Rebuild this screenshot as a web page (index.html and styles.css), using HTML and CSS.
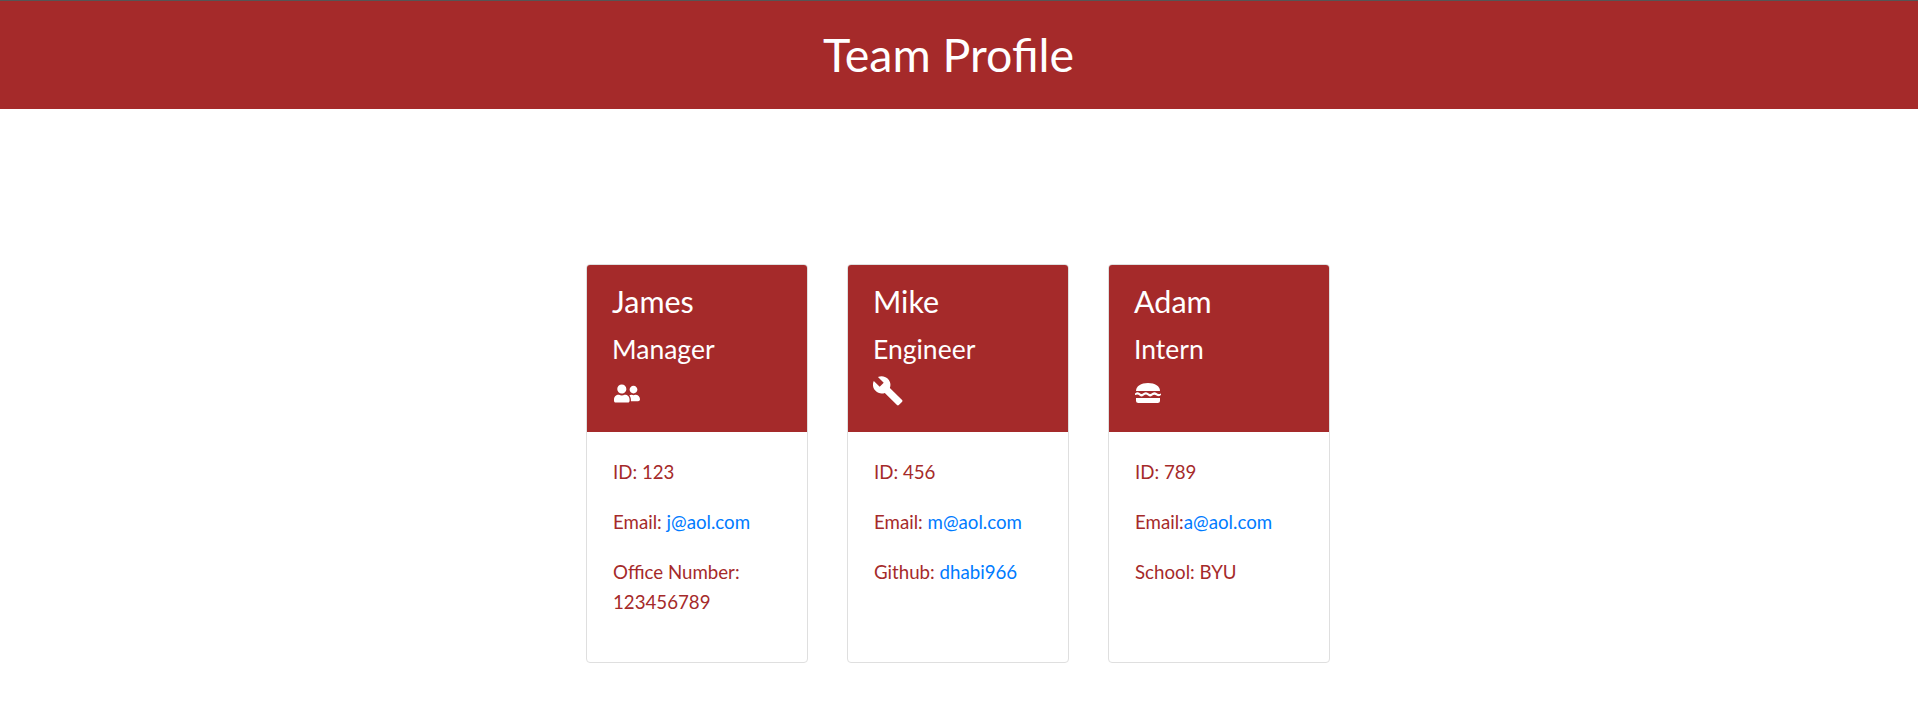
FILE: index.html
```html
<!DOCTYPE html>
<html lang="en">
  <head>
    <meta charset="UTF-8" />
    <meta name="viewport" content="width=device-width, initial-scale=1.0" />
    <title>Team Profile</title>
    <link rel="stylesheet" href="styles.css">
  </head>
  <body>
    <header class="page-header">
      <h1>Team Profile</h1>
    </header>

    <main class="team">
      <div class="card">
        <div class="card-header">
          <h2>James</h2>
          <h3>Manager</h3>
          <svg class="icon icon-people" viewBox="0 0 640 512" fill="#fff">
            <path d="M192 256c61.9 0 112-50.1 112-112S253.9 32 192 32 80 82.1 80 144s50.1 112 112 112zm76.8 32h-8.3c-20.8 10-43.9 16-68.5 16s-47.6-6-68.5-16h-8.3C51.6 288 0 339.6 0 403.2V432c0 26.5 21.5 48 48 48h288c26.5 0 48-21.5 48-48v-28.8c0-63.6-51.6-115.2-115.2-115.2zM480 256c53 0 96-43 96-96s-43-96-96-96-96 43-96 96 43 96 96 96zm48 32h-3.8c-13.9 4.8-28.6 8-44.2 8s-30.3-3.2-44.2-8H432c-20.4 0-39.2 5.9-55.7 15.4 24.4 26.3 39.7 61.2 39.7 99.8v38.4c0 2.2-.5 4.3-.6 6.4H592c26.5 0 48-21.5 48-48 0-61.9-50.1-112-112-112z"/>
          </svg>
        </div>
        <div class="card-body">
          <p>ID: 123</p>
          <p>Email: <a href="#">j@aol.com</a></p>
          <p>Office Number: 123456789</p>
        </div>
      </div>

      <div class="card">
        <div class="card-header">
          <h2>Mike</h2>
          <h3>Engineer</h3>
          <svg class="icon icon-wrench" viewBox="1 1 22.4 22.4" fill="#fff">
            <path d="M22.7 19l-9.1-9.1c.9-2.3.4-5-1.5-6.9-2-2-5-2.4-7.4-1.3L9 6 6 9 1.6 4.7C.4 7.1.9 10.1 2.9 12.1c1.9 1.9 4.6 2.4 6.9 1.5l9.1 9.1c.4.4 1 .4 1.4 0l2.3-2.3c.5-.4.5-1.1.1-1.4z"/>
          </svg>
        </div>
        <div class="card-body">
          <p>ID: 456</p>
          <p>Email: <a href="#">m@aol.com</a></p>
          <p>Github: <a href="#">dhabi966</a></p>
        </div>
      </div>

      <div class="card">
        <div class="card-header">
          <h2>Adam</h2>
          <h3>Intern</h3>
          <svg class="icon icon-burger" viewBox="0 0 26 20" fill="#fff">
            <path d="M1 8C1 3 6 0 13 0s12 3 12 8z"/>
            <path d="M0 10.500c2-1.600 3-1.600 4.500-.4s2.500 1.200 4.200 0 2.600-1.200 4.300 0 2.600 1.200 4.300 0 2.700-1.200 4.200 0 2.500 1.200 4.500.4v1.600c-2 1.500-3 1.500-4.500.4s-2.700-1.200-4.200 0-2.600 1.200-4.300 0-2.600-1.200-4.300 0-2.700 1.200-4.200 0-2.500-1.100-4.500-.4z"/>
            <path d="M1 15h24v2.500a2.500 2.500 0 0 1-2.500 2.500h-19A2.500 2.500 0 0 1 1 17.500z"/>
          </svg>
        </div>
        <div class="card-body">
          <p>ID: 789</p>
          <p>Email:<a href="#">a@aol.com</a></p>
          <p>School: BYU</p>
        </div>
      </div>
    </main>
  </body>
</html>
```

FILE: styles.css
```css
body {
  margin: 0;
  font-family: Lato, "Open Sans", sans-serif;
  background-color: #fff;
  color: #a52a2a;
}

.page-header {
  height: 108px;
  padding-right: 21px;
  border-top: 1px solid #555;
  background-color: #a52a2a;
  color: #fff;
  display: flex;
  align-items: center;
  justify-content: center;
}

.page-header h1 {
  margin: 0;
  font-size: 46.5px;
  font-weight: 400;
  line-height: 1.2;
}

.team {
  display: flex;
  justify-content: center;
  gap: 39px;
  padding: 155px 2px 0 0;
}

.card {
  width: 222px;
  height: 399px;
  box-sizing: border-box;
  border: 1px solid #dfdfdf;
  border-radius: 4px;
  overflow: hidden;
}

.card-header {
  height: 168px;
  box-sizing: border-box;
  margin: -1px -1px 0;
  padding: 18px 25px 0 26px;
  background-color: #a52a2a;
  color: #fff;
}

.card-header h2 {
  margin: 0;
  font-size: 30.5px;
  font-weight: 400;
  line-height: 38px;
}

.card-header h3 {
  margin: 13px 0 0;
  font-size: 26.5px;
  font-weight: 400;
  line-height: 32px;
}

.icon {
  display: block;
}

.icon-people {
  width: 26px;
  height: 21px;
  margin: 18px 0 0 2px;
}

.icon-wrench {
  width: 30px;
  height: 30px;
  margin-top: 11px;
}

.icon-burger {
  width: 26px;
  height: 20px;
  margin: 18px 0 0 1px;
}

.card-body {
  padding: 25px 25px 0 26px;
}

.card-body p {
  margin: 0 0 20px;
  font-size: 18.7px;
  line-height: 30px;
}

.card-body a {
  color: #007bff;
  text-decoration: none;
}
```
